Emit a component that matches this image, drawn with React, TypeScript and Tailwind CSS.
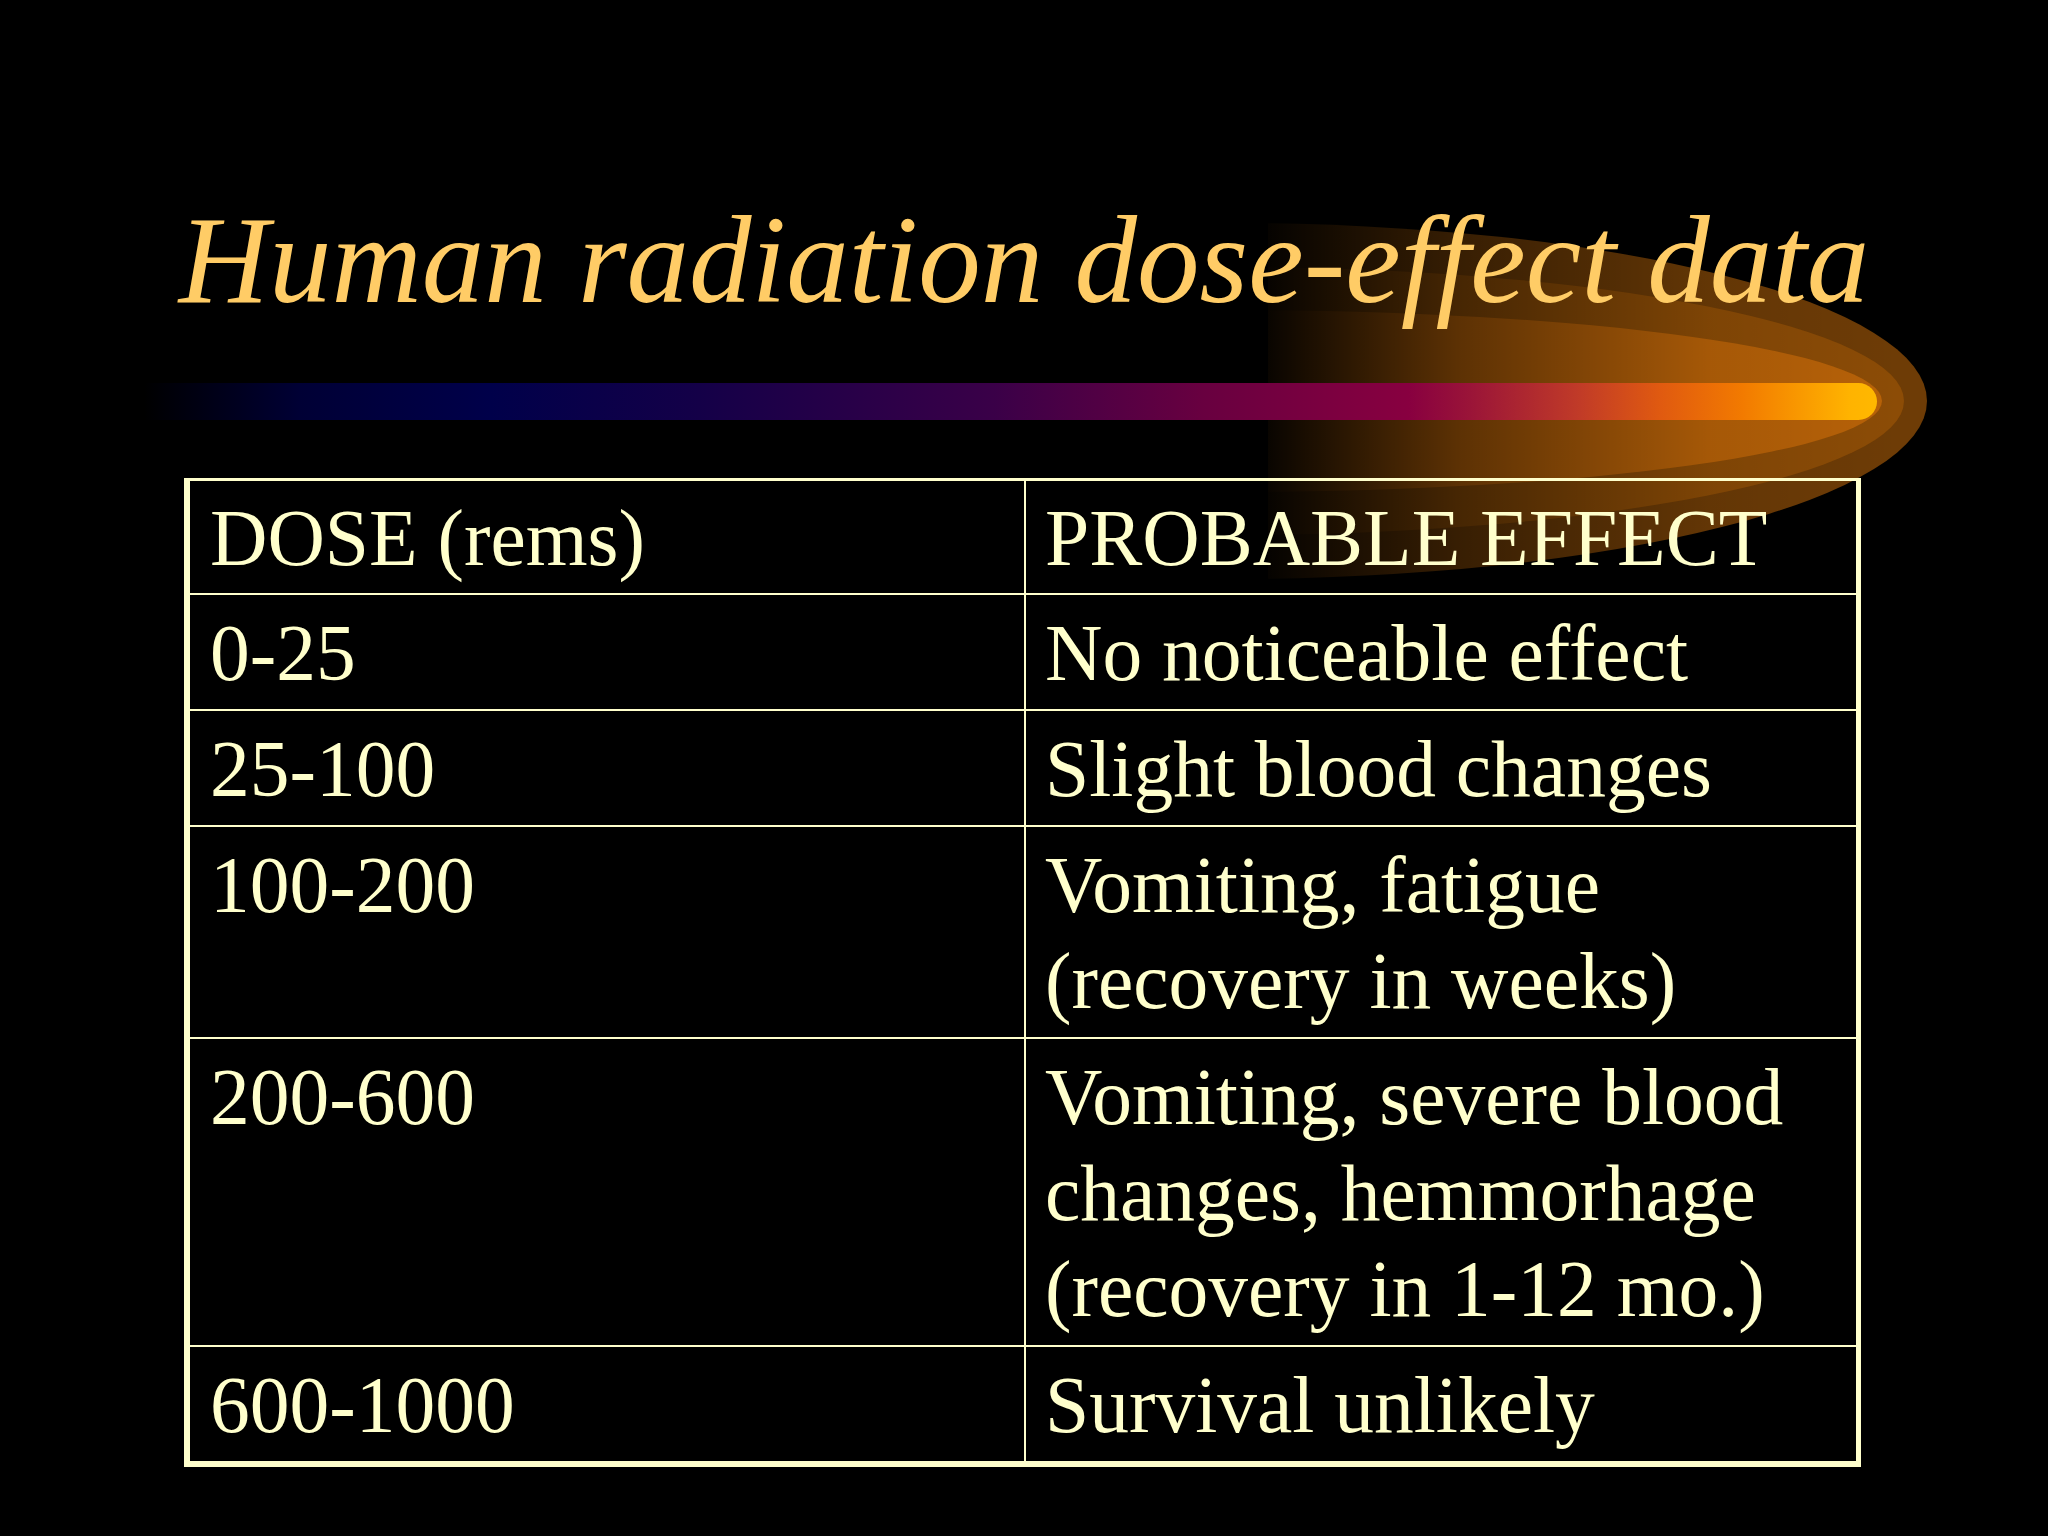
import React from 'react';

const rows: { dose: string; effect: string[] }[] = [
    { dose: '0-25', effect: ['No noticeable effect'] },
    { dose: '25-100', effect: ['Slight blood changes'] },
    { dose: '100-200', effect: ['Vomiting, fatigue', '(recovery in weeks)'] },
    { dose: '200-600', effect: ['Vomiting, severe blood', 'changes, hemmorhage', '(recovery in 1-12 mo.)'] },
    { dose: '600-1000', effect: ['Survival unlikely'] },
];

// comet glow behind the title and header row
const Glow: React.FC = () => (
    <svg className="absolute inset-0 pointer-events-none" width={2048} height={1536} viewBox="0 0 2048 1536">
        <defs>
            <linearGradient id="fade" x1={1268} x2={1900} y1={0} y2={0} gradientUnits="userSpaceOnUse">
                <stop offset="0" stopColor="#000" stopOpacity={0.95} />
                <stop offset="0.3" stopColor="#000" stopOpacity={0.5} />
                <stop offset="0.7" stopColor="#000" stopOpacity={0.1} />
                <stop offset="1" stopColor="#000" stopOpacity={0} />
            </linearGradient>
            <clipPath id="cut">
                <rect x={1268} y={0} width={780} height={1536} />
            </clipPath>
        </defs>
        <g clipPath="url(#cut)">
            <ellipse cx={1230} cy={401} rx={697} ry={178} fill="#6e3c06" />
            <ellipse cx={1230} cy={401} rx={674} ry={134} fill="#8c4c06" />
            <ellipse cx={1230} cy={401} rx={652} ry={91} fill="#b86208" />
            <rect x={1268} y={200} width={700} height={420} fill="url(#fade)" />
        </g>
    </svg>
);

const App: React.FC = () => {
    return (
        <div className="relative w-[2048px] h-[1536px] bg-black overflow-hidden font-['Liberation_Serif','Times_New_Roman',serif]">
            <Glow />
            <div className="relative flex flex-col">
                <h1 className="pt-[198px] text-center italic text-[125px] leading-[125px] text-[#ffcc66] font-normal">
                    Human radiation dose-effect data
                </h1>

                <div className="mt-[60px] ml-[144px] w-[1733px] h-[37px] rounded-r-full bg-[linear-gradient(90deg,#000000_0%,#000035_9%,#00004a_20%,#140048_32%,#3a0048_49%,#680040_61%,#880040_73%,#9a1438_76.5%,#c03a28_82.7%,#e05a10_87.5%,#f27a00_92.2%,#ffb300_98.4%,#ffb800_100%)]" />

                <div className="mt-[58px] ml-[184px] w-[1677px] border-l-[6px] border-r-[5px] border-t-[3px] border-b-[6px] border-[#ffffcc] grid grid-cols-[836px_830px] text-[79.5px] leading-[96px] text-[#ffffcc]">
                    <div className="border-r-2 border-b-2 border-[#ffffcc] pl-[20px] pt-[9px] pb-[7px]">DOSE (rems)</div>
                    <div className="border-b-2 border-[#ffffcc] pl-[19px] pt-[9px] pb-[7px]">PROBABLE EFFECT</div>
                    {rows.map((r, i) => {
                        const last = i === rows.length - 1;
                        return (
                            <React.Fragment key={r.dose}>
                                <div className={`border-r-2 border-[#ffffcc] pl-[20px] pt-[10px] pb-[8px] ${last ? '' : 'border-b-2'}`}>
                                    {r.dose}
                                </div>
                                <div className={`border-[#ffffcc] pl-[19px] pt-[10px] pb-[8px] ${last ? '' : 'border-b-2'}`}>
                                    {r.effect.map((line) => (
                                        <div key={line} className="whitespace-nowrap">{line}</div>
                                    ))}
                                </div>
                            </React.Fragment>
                        );
                    })}
                </div>
            </div>
        </div>
    );
};

export default App;
